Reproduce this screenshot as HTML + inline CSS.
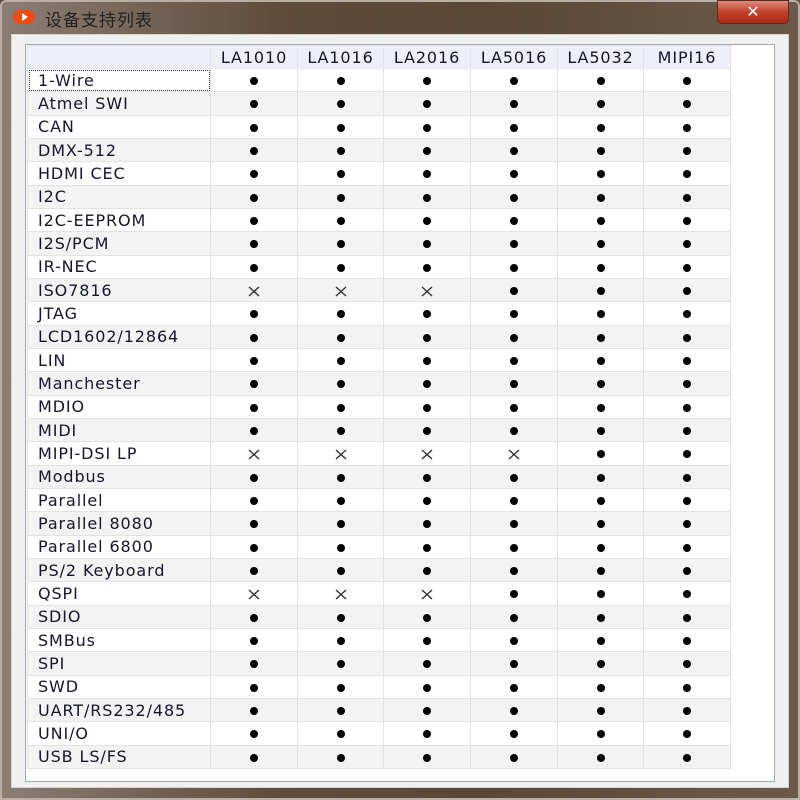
<!DOCTYPE html>
<html><head><meta charset="utf-8"><style>
*{margin:0;padding:0;box-sizing:border-box}
body{width:800px;height:800px;overflow:hidden;background:#5e4c3c;position:relative;font-family:"DejaVu Sans","Liberation Sans",sans-serif}
.frame{position:absolute;left:0;top:0;width:800px;height:800px;background:linear-gradient(90deg,#8a7d72 0%,#5f4c3b 35%,#5a4736 60%,#6b5a4a 100%);border:2px solid #b8aea4;border-radius:6px 6px 0 0}
.title{position:absolute;left:45px;top:6px;font:17px "Noto Sans CJK SC",sans-serif;color:#222;letter-spacing:1px}
.icon{position:absolute;left:13px;top:10px;width:22px;height:14px;border-radius:7px;background:#f04a10}
.icon:after{content:"";position:absolute;left:9px;top:3px;width:0;height:0;border-left:6px solid #fff;border-top:4px solid transparent;border-bottom:4px solid transparent}
.close{position:absolute;left:717px;top:0;width:72px;height:24px;border-radius:0 0 5px 5px;background:linear-gradient(#e08a7a,#c2412c 50%,#a82a18);border:1px solid #5a2a20;color:#fff;font:bold 16px "DejaVu Sans",sans-serif;text-align:center;line-height:22px}
.client{position:absolute;left:11px;top:34px;width:778px;height:754px;background:#f0f0f0;border:1px solid #d8d4d0}
.list{position:absolute;left:25px;top:44px;width:750px;height:738px;background:#fff;border:1px solid #a0a8b4}
table{position:absolute;left:27px;top:45px;border-collapse:collapse;table-layout:fixed}
td{height:23.33px;border:1px solid #e2e2e2;text-align:center;font-size:16px;letter-spacing:0.9px;color:#15152e;padding:0;white-space:nowrap}
td.l{text-align:left;padding-left:10px}
tr.h td{height:23px;background:#efeffc;border-color:#e4e4ee}
tr:nth-child(odd):not(.h) td{background:#f3f3f3}
.d{display:inline-block;width:8px;height:8px;border-radius:50%;background:#000;vertical-align:middle}
.x{display:inline-block;vertical-align:middle}
</style></head><body>
<div class="frame"></div>
<div class="icon"></div>
<div class="title">设备支持列表</div>
<div class="close">✕</div>
<div class="client"></div>
<div class="list"></div>
<table>
<colgroup><col style="width:183px"><col style="width:87px"><col style="width:86px"><col style="width:87px"><col style="width:87px"><col style="width:86px"><col style="width:87px"></colgroup>
<tr class="h"><td></td><td>LA1010</td><td>LA1016</td><td>LA2016</td><td>LA5016</td><td>LA5032</td><td>MIPI16</td></tr>
<tr><td class="l" style="outline:1px dotted #333;outline-offset:-2px">1-Wire</td><td><i class="d"></i></td><td><i class="d"></i></td><td><i class="d"></i></td><td><i class="d"></i></td><td><i class="d"></i></td><td><i class="d"></i></td></tr>
<tr><td class="l">Atmel SWI</td><td><i class="d"></i></td><td><i class="d"></i></td><td><i class="d"></i></td><td><i class="d"></i></td><td><i class="d"></i></td><td><i class="d"></i></td></tr>
<tr><td class="l">CAN</td><td><i class="d"></i></td><td><i class="d"></i></td><td><i class="d"></i></td><td><i class="d"></i></td><td><i class="d"></i></td><td><i class="d"></i></td></tr>
<tr><td class="l">DMX-512</td><td><i class="d"></i></td><td><i class="d"></i></td><td><i class="d"></i></td><td><i class="d"></i></td><td><i class="d"></i></td><td><i class="d"></i></td></tr>
<tr><td class="l">HDMI CEC</td><td><i class="d"></i></td><td><i class="d"></i></td><td><i class="d"></i></td><td><i class="d"></i></td><td><i class="d"></i></td><td><i class="d"></i></td></tr>
<tr><td class="l">I2C</td><td><i class="d"></i></td><td><i class="d"></i></td><td><i class="d"></i></td><td><i class="d"></i></td><td><i class="d"></i></td><td><i class="d"></i></td></tr>
<tr><td class="l">I2C-EEPROM</td><td><i class="d"></i></td><td><i class="d"></i></td><td><i class="d"></i></td><td><i class="d"></i></td><td><i class="d"></i></td><td><i class="d"></i></td></tr>
<tr><td class="l">I2S/PCM</td><td><i class="d"></i></td><td><i class="d"></i></td><td><i class="d"></i></td><td><i class="d"></i></td><td><i class="d"></i></td><td><i class="d"></i></td></tr>
<tr><td class="l">IR-NEC</td><td><i class="d"></i></td><td><i class="d"></i></td><td><i class="d"></i></td><td><i class="d"></i></td><td><i class="d"></i></td><td><i class="d"></i></td></tr>
<tr><td class="l">ISO7816</td><td><svg class="x" width="12" height="11"><path d="M1 1L11 10M11 1L1 10" stroke="#333" stroke-width="1.4"/></svg></td><td><svg class="x" width="12" height="11"><path d="M1 1L11 10M11 1L1 10" stroke="#333" stroke-width="1.4"/></svg></td><td><svg class="x" width="12" height="11"><path d="M1 1L11 10M11 1L1 10" stroke="#333" stroke-width="1.4"/></svg></td><td><i class="d"></i></td><td><i class="d"></i></td><td><i class="d"></i></td></tr>
<tr><td class="l">JTAG</td><td><i class="d"></i></td><td><i class="d"></i></td><td><i class="d"></i></td><td><i class="d"></i></td><td><i class="d"></i></td><td><i class="d"></i></td></tr>
<tr><td class="l">LCD1602/12864</td><td><i class="d"></i></td><td><i class="d"></i></td><td><i class="d"></i></td><td><i class="d"></i></td><td><i class="d"></i></td><td><i class="d"></i></td></tr>
<tr><td class="l">LIN</td><td><i class="d"></i></td><td><i class="d"></i></td><td><i class="d"></i></td><td><i class="d"></i></td><td><i class="d"></i></td><td><i class="d"></i></td></tr>
<tr><td class="l">Manchester</td><td><i class="d"></i></td><td><i class="d"></i></td><td><i class="d"></i></td><td><i class="d"></i></td><td><i class="d"></i></td><td><i class="d"></i></td></tr>
<tr><td class="l">MDIO</td><td><i class="d"></i></td><td><i class="d"></i></td><td><i class="d"></i></td><td><i class="d"></i></td><td><i class="d"></i></td><td><i class="d"></i></td></tr>
<tr><td class="l">MIDI</td><td><i class="d"></i></td><td><i class="d"></i></td><td><i class="d"></i></td><td><i class="d"></i></td><td><i class="d"></i></td><td><i class="d"></i></td></tr>
<tr><td class="l">MIPI-DSI LP</td><td><svg class="x" width="12" height="11"><path d="M1 1L11 10M11 1L1 10" stroke="#333" stroke-width="1.4"/></svg></td><td><svg class="x" width="12" height="11"><path d="M1 1L11 10M11 1L1 10" stroke="#333" stroke-width="1.4"/></svg></td><td><svg class="x" width="12" height="11"><path d="M1 1L11 10M11 1L1 10" stroke="#333" stroke-width="1.4"/></svg></td><td><svg class="x" width="12" height="11"><path d="M1 1L11 10M11 1L1 10" stroke="#333" stroke-width="1.4"/></svg></td><td><i class="d"></i></td><td><i class="d"></i></td></tr>
<tr><td class="l">Modbus</td><td><i class="d"></i></td><td><i class="d"></i></td><td><i class="d"></i></td><td><i class="d"></i></td><td><i class="d"></i></td><td><i class="d"></i></td></tr>
<tr><td class="l">Parallel</td><td><i class="d"></i></td><td><i class="d"></i></td><td><i class="d"></i></td><td><i class="d"></i></td><td><i class="d"></i></td><td><i class="d"></i></td></tr>
<tr><td class="l">Parallel 8080</td><td><i class="d"></i></td><td><i class="d"></i></td><td><i class="d"></i></td><td><i class="d"></i></td><td><i class="d"></i></td><td><i class="d"></i></td></tr>
<tr><td class="l">Parallel 6800</td><td><i class="d"></i></td><td><i class="d"></i></td><td><i class="d"></i></td><td><i class="d"></i></td><td><i class="d"></i></td><td><i class="d"></i></td></tr>
<tr><td class="l">PS/2 Keyboard</td><td><i class="d"></i></td><td><i class="d"></i></td><td><i class="d"></i></td><td><i class="d"></i></td><td><i class="d"></i></td><td><i class="d"></i></td></tr>
<tr><td class="l">QSPI</td><td><svg class="x" width="12" height="11"><path d="M1 1L11 10M11 1L1 10" stroke="#333" stroke-width="1.4"/></svg></td><td><svg class="x" width="12" height="11"><path d="M1 1L11 10M11 1L1 10" stroke="#333" stroke-width="1.4"/></svg></td><td><svg class="x" width="12" height="11"><path d="M1 1L11 10M11 1L1 10" stroke="#333" stroke-width="1.4"/></svg></td><td><i class="d"></i></td><td><i class="d"></i></td><td><i class="d"></i></td></tr>
<tr><td class="l">SDIO</td><td><i class="d"></i></td><td><i class="d"></i></td><td><i class="d"></i></td><td><i class="d"></i></td><td><i class="d"></i></td><td><i class="d"></i></td></tr>
<tr><td class="l">SMBus</td><td><i class="d"></i></td><td><i class="d"></i></td><td><i class="d"></i></td><td><i class="d"></i></td><td><i class="d"></i></td><td><i class="d"></i></td></tr>
<tr><td class="l">SPI</td><td><i class="d"></i></td><td><i class="d"></i></td><td><i class="d"></i></td><td><i class="d"></i></td><td><i class="d"></i></td><td><i class="d"></i></td></tr>
<tr><td class="l">SWD</td><td><i class="d"></i></td><td><i class="d"></i></td><td><i class="d"></i></td><td><i class="d"></i></td><td><i class="d"></i></td><td><i class="d"></i></td></tr>
<tr><td class="l">UART/RS232/485</td><td><i class="d"></i></td><td><i class="d"></i></td><td><i class="d"></i></td><td><i class="d"></i></td><td><i class="d"></i></td><td><i class="d"></i></td></tr>
<tr><td class="l">UNI/O</td><td><i class="d"></i></td><td><i class="d"></i></td><td><i class="d"></i></td><td><i class="d"></i></td><td><i class="d"></i></td><td><i class="d"></i></td></tr>
<tr><td class="l">USB LS/FS</td><td><i class="d"></i></td><td><i class="d"></i></td><td><i class="d"></i></td><td><i class="d"></i></td><td><i class="d"></i></td><td><i class="d"></i></td></tr>
</table>
</body></html>
